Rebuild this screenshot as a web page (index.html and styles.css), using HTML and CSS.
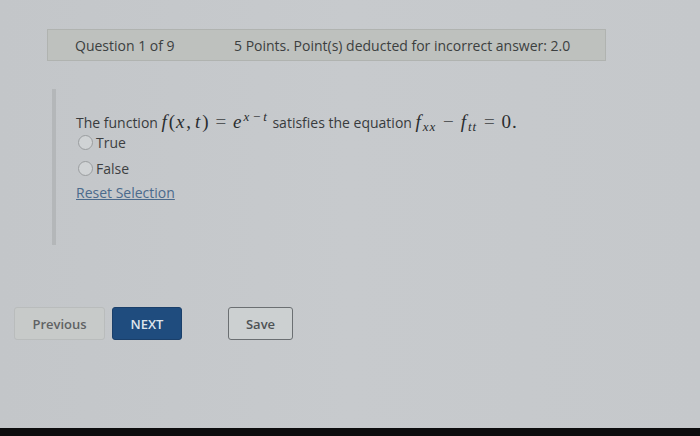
FILE: index.html
```html
<!DOCTYPE html>
<html>
<head>
<meta charset="utf-8">
<link rel="stylesheet" href="styles.css">
</head>
<body>
<div class="screen">
  <div class="page">
    <div class="header">
      <span class="qnum">Question 1 of 9</span>
      <span class="points">5 Points. Point(s) deducted for incorrect answer: 2.0</span>
    </div>
    <div class="question">
      <p class="stem">The function <span class="math"><i>f</i>(<i>x</i>,<span class="thin"></span><i>t</i>)<span class="op">=</span><i>e</i><sup><i>x</i><span class="sop">−</span><i>t</i></sup></span> satisfies the equation <span class="math"><i>f</i><sub><i>xx</i></sub><span class="op">−</span><i>f</i><sub><i>tt</i></sub><span class="op">=</span>0.</span></p>
      <label class="option"><span class="radio"></span>True</label>
      <label class="option"><span class="radio"></span>False</label>
      <a class="reset" href="#">Reset Selection</a>
    </div>
    <div class="buttons">
      <button class="btn prev">Previous</button>
      <button class="btn next">NEXT</button>
      <button class="btn save">Save</button>
    </div>
  </div>
  <div class="bezel"></div>
</div>
</body>
</html>
```
FILE: styles.css
```css
html, body {
  margin: 0;
  padding: 0;
}
body {
  width: 700px;
  height: 436px;
  overflow: hidden;
  background: #c5c8cc;
  font-family: "Open Sans", "Noto Sans", sans-serif;
  color: #3a3d40;
}
.screen {
  height: 436px;
  display: flex;
  flex-direction: column;
}
.page {
  flex: 1;
  padding-top: 29px;
  background: linear-gradient(90deg, #c3c6c9 0%, #c7cacd 50%, #c5c8cb 100%);
}
.header {
  margin-left: 47px;
  width: 559px;
  height: 32px;
  box-sizing: border-box;
  border: 1px solid #b0b3b0;
  background: #bec1be;
  display: flex;
  align-items: center;
  font-size: 14px;
  color: #3c3f40;
}
.qnum {
  margin-left: 27px;
  width: 159px;
}
.question {
  margin-left: 52px;
  margin-top: 28px;
  height: 156px;
  border-left: 4px solid #b4b7b9;
  padding-left: 20px;
  padding-top: 23px;
  box-sizing: border-box;
  font-size: 14px;
}
.stem {
  margin: 0;
  line-height: 20px;
  color: #383b3d;
}
.math {
  font-family: "Liberation Serif", "DejaVu Serif", serif;
  font-size: 19px;
  color: #2a2d2f;
  letter-spacing: 0.9px;
}
.math i {
  padding-right: 1px;
}
.thin {
  display: inline-block;
  width: 3px;
}
.op {
  display: inline-block;
  margin: 0 6px;
  color: #55585a;
}
.sop {
  margin: 0 2px;
}
.math sup, .math sub {
  font-size: 13px;
  line-height: 0;
}
.math sup {
  vertical-align: 7px;
}
.math sub {
  vertical-align: -3px;
}
.option {
  display: flex;
  align-items: center;
  height: 22px;
  color: #3d4042;
  margin-top: -2px;
}
.option + .option {
  margin-top: 4px;
}
.radio {
  width: 13px;
  height: 13px;
  border-radius: 50%;
  border: 1px solid #9a9d9f;
  background: #d0d3d5;
  margin-left: 2px;
  margin-right: 3px;
}
.reset {
  display: inline-block;
  margin-top: 4px;
  color: #4b6a8c;
  text-decoration: underline;
  font-size: 14px;
}
.buttons {
  margin-top: 62px;
  display: flex;
  align-items: center;
  padding-left: 14px;
}
.btn {
  font-family: "Open Sans", "Noto Sans", sans-serif;
  font-size: 13px;
  font-weight: 600;
  height: 33px;
  border-radius: 3px;
  box-sizing: border-box;
}
.prev {
  width: 91px;
  border: 1px solid #b9bcbc;
  background: #c7cac9;
  color: #5f6264;
}
.next {
  margin-left: 7px;
  width: 70px;
  border: 1px solid #1a3f6a;
  background: #1f4c7e;
  color: #dfe5ec;
}
.save {
  margin-left: 46px;
  width: 65px;
  border: 1px solid #6b6f72;
  background: #ccd0d1;
  color: #4e5255;
  font-weight: 600;
}
.bezel {
  height: 8px;
  background: #0d0d0e;
}
```
